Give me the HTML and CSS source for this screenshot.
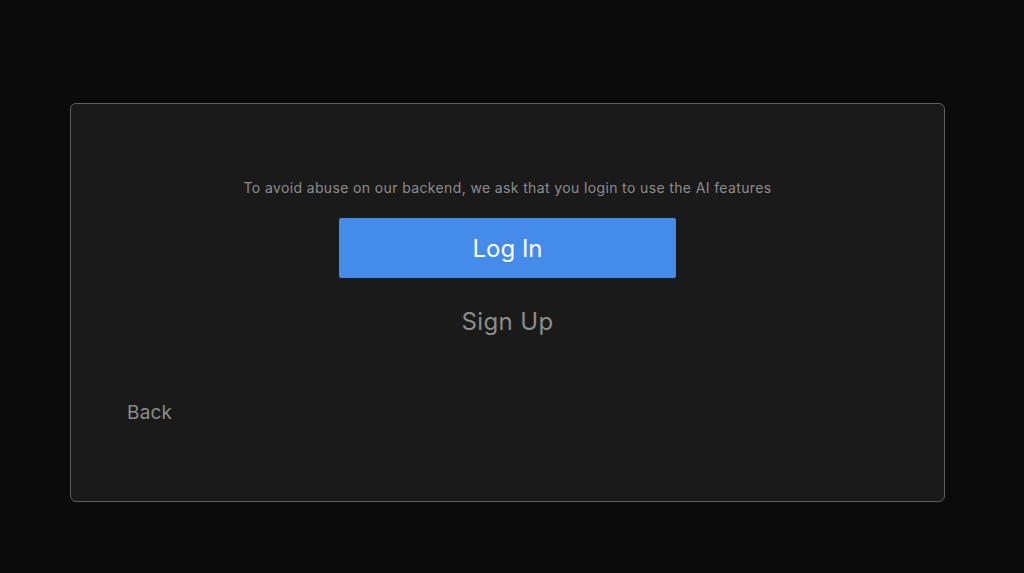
FILE: index.html
```html
<!DOCTYPE html>
<html>
<head>
<meta charset="utf-8">
<link rel="stylesheet" href="styles.css">
</head>
<body>
<div class="page">
  <div class="card">
    <p class="notice">To avoid abuse on our backend, we ask that you login to use the AI features</p>
    <button class="login">Log In</button>
    <button class="signup">Sign Up</button>
    <div class="footer">
      <button class="back">Back</button>
    </div>
  </div>
</div>
</body>
</html>
```
FILE: styles.css
```css
html, body {
  margin: 0;
  padding: 0;
  background: #0b0b0b;
  font-family: Inter, "Noto Sans", sans-serif;
}
.page {
  padding: 103px 0 0 70px;
}
.card {
  box-sizing: border-box;
  width: 875px;
  height: 399px;
  background: #1a1a1a;
  border: 1px solid #5e5e5e;
  border-radius: 6px;
  display: flex;
  flex-direction: column;
  align-items: center;
  padding-top: 75px;
}
.notice {
  margin: 0;
  font-size: 14px;
  line-height: 17px;
  color: #8c8c8c;
  letter-spacing: 0.37px;
}
button {
  font-family: inherit;
  border: none;
  background: none;
  cursor: pointer;
  padding: 0;
}
.login {
  margin-top: 22px;
  width: 337px;
  height: 60px;
  background: #448bea;
  color: #ffffff;
  font-size: 24px;
  border-radius: 2px;
}
.signup {
  margin-top: 29px;
  color: #8c8c8c;
  font-size: 24px;
  line-height: 30px;
  letter-spacing: 0.4px;
}
.footer {
  align-self: stretch;
  padding: 64px 0 0 56px;
}
.back {
  color: #8c8c8c;
  font-size: 19px;
  line-height: 24px;
  letter-spacing: 0.2px;
}
```
